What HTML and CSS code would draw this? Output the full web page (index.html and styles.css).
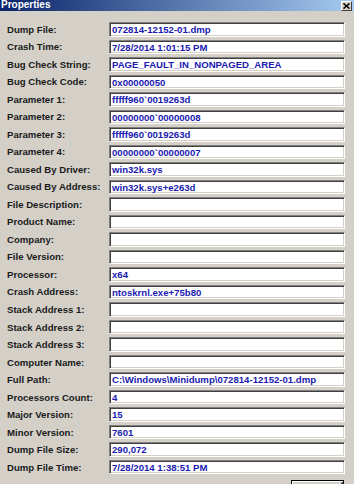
FILE: index.html
```html
<!DOCTYPE html>
<html lang="en">
<head>
    <meta charset="UTF-8">
    <title>Properties</title>
    <link rel="stylesheet" href="styles.css">
</head>
<body>

    <div class="titlebar">
        <span class="title">Properties</span>
        <span class="close-btn">
            <svg width="7" height="6" viewBox="0 0 7 6"><path d="M0.5 0.5 L6.5 5.5 M6.5 0.5 L0.5 5.5" stroke="#000" stroke-width="1.6"/></svg>
        </span>
    </div>

    <div class="fields">
        <label>Dump File:</label><div class="box">072814-12152-01.dmp</div>
        <label>Crash Time:</label><div class="box">7/28/2014 1:01:15 PM</div>
        <label>Bug Check String:</label><div class="box">PAGE_FAULT_IN_NONPAGED_AREA</div>
        <label>Bug Check Code:</label><div class="box">0x00000050</div>
        <label>Parameter 1:</label><div class="box">fffff960`0019263d</div>
        <label>Parameter 2:</label><div class="box">00000000`00000008</div>
        <label>Parameter 3:</label><div class="box">fffff960`0019263d</div>
        <label>Parameter 4:</label><div class="box">00000000`00000007</div>
        <label>Caused By Driver:</label><div class="box">win32k.sys</div>
        <label>Caused By Address:</label><div class="box">win32k.sys+e263d</div>
        <label>File Description:</label><div class="box"></div>
        <label>Product Name:</label><div class="box"></div>
        <label>Company:</label><div class="box"></div>
        <label>File Version:</label><div class="box"></div>
        <label>Processor:</label><div class="box">x64</div>
        <label>Crash Address:</label><div class="box">ntoskrnl.exe+75b80</div>
        <label>Stack Address 1:</label><div class="box"></div>
        <label>Stack Address 2:</label><div class="box"></div>
        <label>Stack Address 3:</label><div class="box"></div>
        <label>Computer Name:</label><div class="box"></div>
        <label>Full Path:</label><div class="box">C:\Windows\Minidump\072814-12152-01.dmp</div>
        <label>Processors Count:</label><div class="box">4</div>
        <label>Major Version:</label><div class="box">15</div>
        <label>Minor Version:</label><div class="box">7601</div>
        <label>Dump File Size:</label><div class="box">290,072</div>
        <label>Dump File Time:</label><div class="box">7/28/2014 1:38:51 PM</div>
    </div>

    <div class="buttons">
        <!-- only the top edge shows in the window, label is off screen -->
        <button class="ok-btn" aria-label="OK"></button>
    </div>

</body>
</html>
```

FILE: styles.css
```css
/* Reset */
* {
    margin: 0;
    padding: 0;
    box-sizing: border-box;
}

body {
    width: 354px;
    height: 484px;
    overflow: hidden;
    background: #d4d0c8;
    font-family: "Liberation Sans", Arial, sans-serif;
    font-size: 9.6px;
    line-height: 11px;
    font-weight: bold;
    color: #1a1a1a;
}

/* Window caption */
.titlebar {
    height: 11px;
    background: linear-gradient(to right, #0a246a, #a6caf0);
    display: flex;
    align-items: center;
    justify-content: space-between;
    padding: 0 2px 0 1px;
}

.title {
    color: white;
    font-size: 10px;
    line-height: 10px;
    margin-top: -2px;
}

.close-btn {
    width: 11px;
    height: 10px;
    background: #d4d0c8;
    border: 1px solid;
    border-color: #fff #404040 #404040 #fff;
    display: flex;
    align-items: center;
    justify-content: center;
}

/* Property rows */
.fields {
    display: grid;
    grid-template-columns: 109px 236px;
    grid-auto-rows: 17.52px;
    padding-top: 9.5px;
    align-items: center;
}

.fields label {
    padding-left: 7px;
    white-space: nowrap;
}

.box {
    height: 14.5px;
    background: white;
    border: 1px solid;
    border-color: #808080 #fff #fff #808080;
    box-shadow: inset 1px 1px #404040, inset -1px -1px #d4d0c8;
    color: #1a1ab0;
    padding: 1px 0 0 2px;
    line-height: 11.5px;
    white-space: nowrap;
    overflow: hidden;
}

.buttons {
    display: flex;
    justify-content: flex-end;
    padding: 4px 10px 0 0;
}

.ok-btn {
    width: 53px;
    height: 23px;
    background: #d4d0c8;
    border: 1px solid #000;
    box-shadow: inset 1px 1px #fff, inset -1px -1px #404040, inset -2px -2px #808080;
}
```
